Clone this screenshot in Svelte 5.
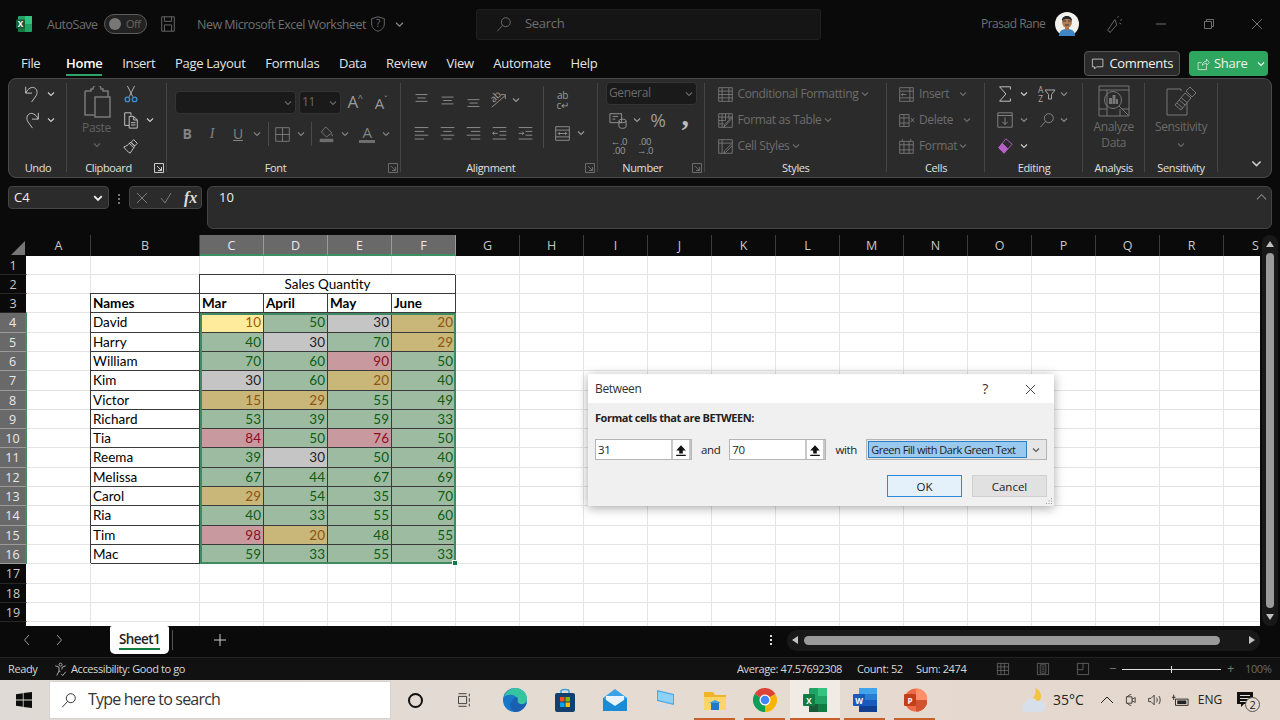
<script>
  const P = {
    undo: 'M3 2v7h7M3 9C6 3 10 2 12.500 3c3.500 1.500 4 6 2 9l-5 7',
    redo: 'M17 2v7h-7M17 9C14 3 10 2 7.500 3c-3.500 1.500-4 6-2 9l5 7',
    copy: 'M3 2h7v3M3 2v14h5M8 6h5l4 4v9H8zM13 6v4h4M10 13h5M10 15.500h5',
    brush: 'M13 3l4 4-3 3-4-4zM10 6l4 4-1 2-5-5zM8 7c-1 2-3 3-6 4 2 3 4 5 7 7 1-2 3-4 4-6',
    grid: 'M2 2h16v16H2zM10 2v16M2 10h16',
    alignT: 'M3 3h14M5 7h10M3 11h14',
    alignM: 'M3 6h14M5 10h10M3 14h14',
    alignB: 'M3 9h14M5 13h10M3 17h14',
    left: 'M2 3h16M2 7.500h11M2 12h16M2 16.500h11',
    center: 'M2 3h16M5 7.500h10M2 12h16M5 16.500h10',
    right: 'M2 3h16M7 7.500h11M2 12h16M7 16.500h11',
    outdent: 'M2 3h16M10 7.500h8M10 12h8M2 16.500h16M8 9.800H2m2-2l-2 2 2 2',
    indent: 'M2 3h16M10 7.500h8M10 12h8M2 16.500h16M2 9.800h6m-2-2l2 2-2 2',
    merge: 'M2 2h16v16H2zM2 6h16M2 14h16M5 10h10M5 10l2-2M5 10l2 2M15 10l-2-2M15 10l-2 2',
    cond: 'M2 2h16v16H2zM2 6h16M2 10h16M2 14h16M6 2v16M14 2v16',
    table: 'M2 2h16v16H2zM2 6h16M2 10h8M2 14h6M6 2v16M10 2v8M14 2v6M18 7l-8 9-2 2 1-3 8-9',
    styles: 'M2 2h16v16H2zM2 6h16M6 2v16M18 9l-8 8-2 1 1-3 8-8',
    insert: 'M2 2h16v16H2zM2 6h16M2 14h16M14 2v16M10 10H4m2-2l-2 2 2 2',
    del: 'M2 3h11v14H2zM2 7h11M2 13h11M7 3v14M15 7l4 5M19 7l-4 5',
    format: 'M2 4h16v14H2zM2 8h16M2 14h16M7 4v14M13 4v14M5 1v3M15 1v3',
    sigma: 'M4 2h12v3M4 2l7 8-7 8h12v-3',
    fillDown: 'M2 2h16v16H2zM2 5h16M10 7v8M7 12l3 3 3-3',
    find: 'M7 8a5 5 0 1 0 10 0a5 5 0 1 0-10 0M8.500 11.500L2.500 18',
    shield: 'M10 2l7 2v6c0 4-3 7-7 8-4-1-7-4-7-8V4z',
    save: 'M3 2h14v16H3zM6 2v5h8V2M6 18v-7h8v7',
    comment: 'M2 3h15v11H8l-3 3v-3H2z',
    share: 'M3 8v10h12v-5M3 8h5M9 12c0-4 3-6 6-6V3l4 5-4 4V9c-2 0-4 1-6 3',
    lamp: 'M3 17l3 2 7-8-2-6zM6 19l-1 1M14 3l1-2M17 6l2-1M16 9l2 1',
    access: 'M10 1.500a2 2 0 1 0 .1 0M3 5l5 2v5l-3 6M17 5l-5 2v3M8 12l2 1M11 16l2 2 4-5',
    gridView: 'M2 2h16v16H2zM2 7h16M2 12h16M7 2v16M12 2v16',
    pageView: 'M2 2h16v16H2zM6 4h8v12H6zM8 7h4M8 10h4M8 13h4',
    breakView: 'M2 2h16v16H2zM2 11h8V2',
    taskview: 'M5 3h9M5 17h9M5 6h9v8H5zM17 3v3M17 8v4M17 14v3',
    cam: 'M4 6a9 9 0 0 1 5-3M4 14a9 9 0 0 0 5 3M3 6h7v8H3zM10 9l4-2v6l-4-2',
    speaker: 'M2 8h3l4-4v12l-4-4H2zM12 7c1 2 1 4 0 6M15 5c2 3 2 7 0 10'
  };
  const cols = 'ABCDEFGHIJKLMNOPQRS'.split('');
  const table = [
    ['David', 10, 50, 30, 20], ['Harry', 40, 30, 70, 29], ['William', 70, 60, 90, 50],
    ['Kim', 30, 60, 20, 40], ['Victor', 15, 29, 55, 49], ['Richard', 53, 39, 59, 33],
    ['Tia', 84, 50, 76, 50], ['Reema', 39, 30, 50, 40], ['Melissa', 67, 44, 67, 69],
    ['Carol', 29, 54, 35, 70], ['Ria', 40, 33, 55, 60], ['Tim', 98, 20, 48, 55], ['Mac', 59, 33, 55, 33]
  ];
  const heads = ['Names', 'Mar', 'April', 'May', 'June'];

  function tone(v) {
    if (v === 10) return 'active';
    if (v === 30) return 'gray';
    if (v < 30) return 'tan';
    if (v > 70) return 'pink';
    return 'green';
  }

  const rows = [];
  for (let r = 1; r <= 20; r++) {
    const cells = [];
    for (let c = 0; c < cols.length; c++) {
      let cls = '', text = '';
      if (r === 2 && c > 2 && c < 6) continue;
      if (r === 2 && c === 2) { cls = 'boxed merged'; text = 'Sales Quantity'; }
      if (r === 3 && c >= 1 && c <= 5) { cls = 'boxed bold'; text = heads[c - 1]; }
      if (r >= 4 && r <= 16) {
        const row = table[r - 4];
        if (c === 1) { cls = 'boxed'; text = row[0]; }
        if (c >= 2 && c <= 5) { cls = 'boxed num ' + tone(row[c - 1]); text = row[c - 1]; }
      }
      cells.push({ cls, text });
    }
    rows.push({ r, cells, sel: r >= 4 && r <= 16 });
  }

  const styleBtns = [['cond', 'Conditional Formatting'], ['table', 'Format as Table'], ['styles', 'Cell Styles']];
  const cellBtns = [['insert', 'Insert', 'w1'], ['del', 'Delete', 'w2'], ['format', 'Format', 'w3']];
  const align1 = ['alignT', 'alignM', 'alignB'];
  const align2 = ['left', 'center', 'right'];
</script>

{#snippet ic(name, cls = '')}
  <svg class="ic {cls}" viewBox="0 0 20 20"><path d={P[name]} /></svg>
{/snippet}

{#snippet chev(cls = '')}
  <svg class="chev {cls}" viewBox="0 0 8 8"><path d="M1 2.500l3 3 3-3" /></svg>
{/snippet}

{#snippet launcher(cls = '')}
  <svg class="launch {cls}" viewBox="0 0 10 10"><path d="M.5.500h9v9h-9zM3 3l4.500 4.500M7.500 4v3.500H4" /></svg>
{/snippet}

<div class="app">
  <header class="title">
    <svg class="xl" viewBox="0 0 18 18">
      <rect x="3" y="1" width="14" height="16" rx="1" fill="#21a366" />
      <rect x="10" y="1" width="7" height="8" fill="#33c481" />
      <rect x="3" y="9" width="7" height="8" fill="#107c41" />
      <rect x="1" y="4.500" width="9" height="9" rx="1" fill="#185c37" />
      <text x="5.500" y="12" text-anchor="middle">X</text>
    </svg>
    <span class="autosave">AutoSave</span>
    <span class="toggle"><i></i>Off</span>
    <span class="save">{@render ic('save')}</span>
    <span class="doc">New Microsoft Excel Worksheet</span>
    <span class="shield">{@render ic('shield')}<b>?</b></span>
    {@render chev('doc-chev')}
    <div class="search">{@render ic('find')}<span>Search</span></div>
    <span class="user">Prasad Rane</span>
    <svg class="avatar" viewBox="0 0 24 24">
      <circle cx="12" cy="12" r="12" fill="#f3f1ec" />
      <path d="M4 24c0-6 4-7 8-7s8 1 8 7z" fill="#3f86c6" />
      <rect x="10" y="14" width="4" height="4" fill="#a8724e" />
      <ellipse cx="12" cy="10" rx="5" ry="6" fill="#b07c58" />
      <path d="M7 9c-1-6 10-7 10 0-2-3-8-3-10 0z" fill="#20272c" />
      <path d="M8 9h3M13 9h3M10 13h4" stroke="#2b2320" stroke-width=".8" />
    </svg>
    <span class="lamp">{@render ic('lamp')}</span>
    <div class="win">
      <svg viewBox="0 0 12 12"><path d="M1 6h10" /></svg>
      <svg viewBox="0 0 12 12"><path d="M1.500 3.500h7v7h-7zM3.500 3.500v-2h7v7h-2" /></svg>
      <svg viewBox="0 0 12 12"><path d="M1 1l10 10M11 1L1 11" /></svg>
    </div>
  </header>

  <nav class="tabs">
    <span>File</span>
    <span class="cur">Home</span>
    <span>Insert</span>
    <span>Page Layout</span>
    <span>Formulas</span>
    <span>Data</span>
    <span>Review</span>
    <span>View</span>
    <span>Automate</span>
    <span>Help</span>
    <button class="comments">{@render ic('comment')}Comments</button>
    <button class="sharebtn">{@render ic('share')}<span>Share</span>{@render chev()}</button>
  </nav>

  <section class="ribbon">
    <div class="group g-undo">
      <div class="body">
        <span class="on">{@render ic('undo')}</span>{@render chev('on')}
        <span class="on">{@render ic('redo')}</span>{@render chev('on')}
      </div>
      <div class="label">Undo</div>
    </div>

    <div class="group g-clip">
      <div class="body">
        <div class="paste">
          <svg class="paste-ic" viewBox="0 0 30 32">
            <path d="M3 5h6V3h2a4 4 0 0 1 8 0h2v2h5v6M3 5v24h9M13 11h15v20H13z" />
          </svg>
          <span>Paste</span>
          {@render chev()}
        </div>
        <div class="clip-tools">
          <svg class="ic" viewBox="0 0 20 20">
            <path class="blade" d="M6 1l6 12M14 1L8 13" />
            <circle class="loop" cx="6" cy="16" r="2.500" /><circle class="loop" cx="14" cy="16" r="2.500" />
          </svg>
          <i></i>
          <span class="on">{@render ic('copy')}</span>{@render chev('on')}
          <span class="on">{@render ic('brush')}</span>
        </div>
      </div>
      <div class="label">Clipboard{@render launcher('on')}</div>
    </div>

    <div class="group g-font">
      <div class="body">
        <div class="font-top">
          <div class="select s-name">{@render chev()}</div>
          <div class="select s-size"><span>11</span>{@render chev()}</div>
          <span class="grow">A<sup>^</sup></span>
          <span class="shrink">A<sup>ˇ</sup></span>
        </div>
        <div class="font-row">
          <b>B</b><em>I</em><u>U</u>{@render chev()}
          <i class="vline"></i>
          {@render ic('grid')}{@render chev()}
          <i class="vline"></i>
          <span class="paint">
            <svg class="ic" viewBox="0 0 20 20"><path d="M9 1l7 7-6 5-6-6zM16 9l1 3" /><rect x="2" y="15" width="16" height="4" /></svg>
          </span>
          {@render chev()}
          <i></i>
          <span class="colora">A<i></i></span>
          {@render chev()}
        </div>
      </div>
      <div class="label">Font{@render launcher()}</div>
    </div>

    <div class="group g-align">
      <div class="body">
        {#each align1 as a}{@render ic(a)}{/each}
        <span class="orient"><span>ab</span><svg viewBox="0 0 20 20"><path d="M2 18L17 5M12 4h5v5" /></svg></span>
        {@render chev()}
        <i></i>
        <i class="vline tall"></i>
        <span class="wrap">ab<br />c↵</span>
        <i></i>
        {#each align2 as a}{@render ic(a)}{/each}
        {@render ic('outdent')}
        <span class="indent">{@render ic('indent')}</span>
        {@render ic('merge')}
        {@render chev()}
      </div>
      <div class="label">Alignment{@render launcher()}</div>
    </div>

    <div class="group g-num">
      <div class="body">
        <div class="select s-num"><span>General</span>{@render chev()}</div>
        <div class="num-row">
          <svg class="ic" viewBox="0 0 20 20"><path d="M1 3h13v10H1zM4 6h6M4 9h3M11 11a4 2 0 1 0 8 0a4 2 0 1 0-8 0M11 11v6c0 3 8 3 8 0v-6" /></svg>
          {@render chev()}
          <span class="pct">%</span>
          <span class="comma">,</span>
        </div>
        <div class="dec-row">
          <span class="dec"><span>←.0</span><span>.00</span></span>
          <span class="dec"><span>.00</span><span>→.0</span></span>
        </div>
      </div>
      <div class="label">Number{@render launcher()}</div>
    </div>

    <div class="group g-styles">
      <div class="body">
        {#each styleBtns as b}
          <div class="line">{@render ic(b[0])}<span>{b[1]}</span>{@render chev()}</div>
        {/each}
      </div>
      <div class="label">Styles</div>
    </div>

    <div class="group g-cells">
      <div class="body">
        {#each cellBtns as b}
          <div class="line">{@render ic(b[0])}<span class={b[2]}>{b[1]}</span>{@render chev()}</div>
        {/each}
      </div>
      <div class="label">Cells</div>
    </div>

    <div class="group g-edit">
      <div class="body">
        <span class="on">{@render ic('sigma')}</span>{@render chev('on')}
        <i></i>
        <span class="sortf"><span class="az">A<br />Z</span><svg viewBox="0 0 12 12"><path d="M1 2h10L7.500 6.500V11h-3V6.500z" /></svg></span>{@render chev()}
        {@render ic('fillDown')}{@render chev()}
        <i></i>
        {@render ic('find')}{@render chev()}
        <svg class="ic eraser" viewBox="0 0 20 20"><path d="M11 2l7 6-9 10-6-6z" /><path class="fillp" d="M7 7l6 6-4 5-6-6z" /></svg>{@render chev('on')}
      </div>
      <div class="label">Editing</div>
    </div>

    <div class="group g-tall g-ana">
      <div class="body">
        <svg class="big" viewBox="0 0 32 32">
          <path d="M1 1h30v30H1zM1 5h30M1 24h8M24 24h7M9 5v26M22 24v7" />
          <circle cx="15" cy="15" r="8.500" />
          <path d="M21 21l9 9" />
          <rect class="solid" x="11" y="13" width="3" height="6" /><rect class="solid" x="14.500" y="10" width="3" height="9" /><rect class="solid" x="18" y="14" width="2" height="5" />
        </svg>
        <span class="txt">Analyze<br />Data</span>
      </div>
      <div class="label">Analysis</div>
    </div>

    <div class="group g-tall g-sens">
      <div class="body">
        <svg class="big" viewBox="0 0 32 32">
          <path d="M2 4h14v2M2 4v26h20V18" />
          <path d="M10 20L20 8l6 5-10 12zM12 18l6 5M14 15l6 5M16 12.500l6 5" />
          <path d="M21 6l4-4 6 6-4 4z" />
        </svg>
        <span class="txt">Sensitivity</span>
        {@render chev()}
      </div>
      <div class="label">Sensitivity</div>
    </div>

    <div class="collapse">{@render chev('on')}</div>
  </section>

  <div class="formula">
    <div class="namebox"><span>C4</span>{@render chev()}</div>
    <span class="dots"></span>
    <div class="fxbox">
      <svg viewBox="0 0 12 12"><path d="M1 1l10 10M11 1L1 11" /></svg>
      <svg viewBox="0 0 12 12"><path d="M1 6l4 5 6-10" /></svg>
      <em>fx</em>
    </div>
    <div class="bar"><span>10</span><svg viewBox="0 0 12 8"><path d="M1 6.500L6 1.500l5 5" /></svg></div>
  </div>

  <div class="sheetrow">
    <div class="sheet">
      <div class="cells">
        <div class="corner"><i></i></div>
        {#each cols as c, i}
          <div class="colhead" class:sel={i >= 2 && i <= 5}>{c}</div>
        {/each}
        {#each rows as row}
          <div class="rowhead" class:sel={row.sel}>{row.r < 20 ? row.r : ''}</div>
          {#each row.cells as cell}
            <div class="cell {cell.cls}">{cell.text}</div>
          {/each}
        {/each}
        <div class="range"><i></i></div>
      </div>
    </div>
    <div class="vscroll">
      <svg viewBox="0 0 10 8"><path d="M5 1l4 6H1z" /></svg>
      <i></i>
      <svg viewBox="0 0 10 8"><path d="M5 7L1 1h8z" /></svg>
    </div>
  </div>

  <div class="sheetbar">
    <svg class="nav first" viewBox="0 0 8 12"><path d="M6 1L1.500 6 6 11" /></svg>
    <svg class="nav" viewBox="0 0 8 12"><path d="M2 1l4.500 5L2 11" /></svg>
    <div class="sheettab"><span>Sheet1</span></div>
    <i class="tabsep"></i>
    <svg class="plus" viewBox="0 0 12 12"><path d="M6 0v12M0 6h12" /></svg>
    <span class="vdots"></span>
    <div class="hscroll">
      <svg viewBox="0 0 8 10"><path d="M1 5l6-4v8z" /></svg>
      <i></i>
      <svg viewBox="0 0 8 10"><path d="M7 5L1 1v8z" /></svg>
    </div>
  </div>

  <footer class="status">
    <span class="ready">Ready</span>
    <span class="a11y">{@render ic('access')}Accessibility: Good to go</span>
    <span class="avg">Average: 47.57692308</span>
    <span class="count">Count: 52</span>
    <span class="sum">Sum: 2474</span>
    <span class="view">{@render ic('gridView')}</span>
    <span class="view">{@render ic('pageView')}</span>
    <span class="view">{@render ic('breakView')}</span>
    <span class="zoomctl">
      <b>−</b>
      <span class="slider"><i></i></span>
      <b>+</b>
    </span>
    <span class="pcent">100%</span>
  </footer>

  <div class="taskbar">
    <svg class="start" viewBox="0 0 16 16">
      <path d="M0 2.200l6.800-1v6.300H0zM7.600 1l8.400-1v7.500H7.600zM0 8.400h6.800v6.400L0 13.800zM7.600 8.400H16V16l-8.400-1.100z" />
    </svg>
    <div class="tsearch">
      <svg viewBox="0 0 20 20"><path d="M7 8a5 5 0 1 0 10 0a5 5 0 1 0-10 0M8.500 11.500L2.500 18" /></svg>
      <span>Type here to search</span>
    </div>
    <i class="cortana"></i>
    <svg class="taskview" viewBox="0 0 20 20"><path d={P.taskview} /></svg>
    <span class="app-ic">
      <svg viewBox="0 0 24 24">
        <circle cx="12" cy="12" r="12" fill="#1777c8" />
        <path d="M1 9C3 3 8 0 13 0c6 0 11 5 11 11 0 4-4 6-7 5-2-1-3-2-2-4-1-5-9-7-14-3z" fill="#35c4a0" />
        <path d="M9 13c1-3 4-4 6-3l-1 2c0 3 3 5 7 4 1 0 2-1 3-2-1 5-6 10-12 10-3-1-5-4-5-7 0-2 1-3 2-4z" fill="#1b5fb0" />
      </svg>
    </span>
    <span class="app-ic">
      <svg viewBox="0 0 24 24">
        <path d="M8 6V3c0-2 8-2 8 0v3" fill="none" stroke="#3aa0d8" stroke-width="1.500" />
        <rect x="2" y="5" width="20" height="19" rx="2" fill="#11406e" />
        <rect x="7" y="9" width="4.500" height="4.500" fill="#f25022" /><rect x="12.500" y="9" width="4.500" height="4.500" fill="#7fba00" />
        <rect x="7" y="14.500" width="4.500" height="4.500" fill="#00a4ef" /><rect x="12.500" y="14.500" width="4.500" height="4.500" fill="#ffb900" />
      </svg>
    </span>
    <span class="app-ic">
      <svg viewBox="0 0 24 24">
        <path d="M0 10L12 1l12 9v13H0z" fill="#37a3e6" />
        <path d="M3 8h18v6l-9 5-9-5z" fill="#e8f3fb" />
        <path d="M0 10l12 8 12-8v13H0z" fill="#1c8bd6" />
      </svg>
    </span>
    <span class="app-ic">
      <svg viewBox="0 0 24 24">
        <path d="M4 2l17 4v11L4 13z" fill="#4aa8e8" />
        <path d="M5 3.500l15 3.500v8.500L5 12z" fill="#8fd0f5" />
        <path d="M2 18l8-2 9 3-7 3z" fill="#d7dde2" />
      </svg>
    </span>
    <span class="app-ic">
      <svg viewBox="0 0 24 24">
        <path d="M1 4h9l2 3h11v15H1z" fill="#f0b429" />
        <path d="M1 9h22v13H1z" fill="#fbd568" />
        <path d="M8 22v-7h8v7z" fill="#1f78c8" />
        <path d="M6 15l6-3 6 3z" fill="#3aa0e8" />
      </svg>
    </span>
    <span class="app-ic">
      <svg viewBox="0 0 24 24">
        <path d="M12 12L1.600 6A12 12 0 0 1 22.400 6z" fill="#db4437" />
        <path d="M12 12l-10.400-6A12 12 0 0 0 12 24z" fill="#0f9d58" />
        <path d="M12 12v12A12 12 0 0 0 22.400 6z" fill="#f4b400" />
        <circle cx="12" cy="12" r="5.500" fill="#fff" /><circle cx="12" cy="12" r="4.300" fill="#4285f4" />
      </svg>
    </span>
    <span class="app-ic current">
      <svg viewBox="0 0 24 24">
        <rect x="6" y="0" width="18" height="24" rx="1" fill="#21a366" />
        <rect x="15" y="0" width="9" height="8" fill="#33c481" />
        <rect x="6" y="16" width="9" height="8" fill="#185c37" /><rect x="15" y="16" width="9" height="8" fill="#107c41" />
        <rect x="0" y="6" width="12" height="12" rx="1" fill="#107c41" />
        <text x="6" y="15.500" text-anchor="middle">X</text>
      </svg>
    </span>
    <span class="app-ic">
      <svg viewBox="0 0 24 24">
        <rect x="6" y="0" width="18" height="24" rx="1" fill="#2b7cd3" />
        <rect x="6" y="0" width="18" height="6" fill="#41a5ee" />
        <rect x="6" y="12" width="18" height="6" fill="#185abd" /><rect x="6" y="18" width="18" height="6" fill="#103f91" />
        <rect x="0" y="6" width="12" height="12" rx="1" fill="#185abd" />
        <text x="6" y="15.500" text-anchor="middle">W</text>
      </svg>
    </span>
    <span class="app-ic">
      <svg viewBox="0 0 24 24">
        <circle cx="13" cy="12" r="11.500" fill="#ed6c47" />
        <path d="M13 .5a11.500 11.500 0 0 1 11.500 11.500H13z" fill="#ff8f6b" />
        <path d="M13 12h11.500A11.500 11.500 0 0 1 13 23.500z" fill="#d35230" />
        <rect x="1" y="6" width="12" height="12" rx="1" fill="#c43e1c" />
        <text x="7" y="15.500" text-anchor="middle">P</text>
      </svg>
    </span>
    <svg class="weather" viewBox="0 0 26 26">
      <path d="M14 1c6 2 8 9 4 14l-8-2c3-3 6-7 4-12z" fill="#f5c242" />
      <path d="M6 25a4.500 4.500 0 0 1-1-9 6 6 0 0 1 11-2 5.500 5.500 0 0 1 5 11z" fill="#d7dfea" />
    </svg>
    <span class="temp">35°C</span>
    <svg class="tray t-up" viewBox="0 0 16 16"><path d="M2 11l6-6 6 6" /></svg>
    <svg class="tray t-cam" viewBox="0 0 20 20"><path d={P.cam} /></svg>
    <svg class="tray t-spk" viewBox="0 0 20 20"><path d={P.speaker} /></svg>
    <svg class="tray t-bat" viewBox="0 0 20 20">
      <path d="M1 7h4M3 4v6M5 9h14v7H5z" /><rect class="lvl" x="7" y="10.500" width="10" height="4" />
    </svg>
    <span class="eng">ENG</span>
    <span class="notif">
      <svg viewBox="0 0 18 18"><path d="M1 1h16v12H8l-3 3v-3H1z" /><path class="ln" d="M4 4.500h10M4 7.500h10M4 10.500h7" /></svg>
      <b>2</b>
    </span>
  </div>

  <div class="dialog">
    <div class="d-title">
      <span>Between</span>
      <b>?</b>
      <svg viewBox="0 0 12 12"><path d="M1 1l10 10M11 1L1 11" /></svg>
    </div>
    <div class="d-body">
      <div class="d-head">Format cells that are BETWEEN:</div>
      <div class="d-row">
        <div class="refbox"><span>31</span><i><svg viewBox="0 0 10 10"><path d="M5 1L9 5.500H6.500V8h-3V5.500H1zM1 9h8v1H1z" /></svg></i></div>
        <span class="word w-and">and</span>
        <div class="refbox"><span>70</span><i><svg viewBox="0 0 10 10"><path d="M5 1L9 5.500H6.500V8h-3V5.500H1zM1 9h8v1H1z" /></svg></i></div>
        <span class="word w-with">with</span>
        <div class="combo"><span>Green Fill with Dark Green Text</span><i>{@render chev()}</i></div>
      </div>
      <div class="d-btns">
        <button class="ok">OK</button>
        <button class="cancel">Cancel</button>
      </div>
      <svg class="grip" viewBox="0 0 8 8"><path d="M6 1h1v1H6zM3.500 3.500h1v1h-1zM6 3.500h1v1H6zM1 6h1v1H1zM3.500 6h1v1h-1zM6 6h1v1H6z" /></svg>
    </div>
  </div>
</div>

<style>
  :global(body) { margin: 0; background: #0a0a0a; }
  .app {
    position: relative;
    width: 1280px;
    height: 720px;
    overflow: hidden;
    display: flex;
    flex-direction: column;
    background: #0a0a0a;
    color: #ddd;
    font: 12px/1.2 "Open Sans", "Noto Sans", sans-serif;
    letter-spacing: -.03em;
  }
  svg { display: block; flex: none; }
  .ic { width: 18px; height: 18px; fill: none; stroke: currentColor; stroke-width: 1; }
  .chev { width: 8px; height: 8px; fill: none; stroke: currentColor; stroke-width: 1.1; }
  .launch { width: 10px; height: 10px; fill: none; stroke: currentColor; stroke-width: 1; }
  i { font-style: normal; display: block; }

  /* title bar */
  .title { height: 48px; flex: none; display: flex; align-items: center; color: #6f6f6f; font-size: 12.500px; letter-spacing: -.5px; }
  .xl { width: 18px; height: 18px; margin-left: 15px; }
  .xl text, .app-ic text { fill: #fff; font: 700 8px "Open Sans", sans-serif; letter-spacing: 0; }
  .autosave { margin-left: 14px; width: 57px; }
  .toggle {
    width: 43px; height: 20px; box-sizing: border-box; border: 1px solid #5c5c5c; border-radius: 10px; background: #222;
    display: flex; align-items: center; gap: 5px; padding-left: 4px; font-size: 11px; color: #666;
  }
  .toggle i { width: 12px; height: 12px; border-radius: 50%; background: #777; }
  .save { margin-left: 12px; }
  .doc { margin-left: 20px; width: 171px; white-space: nowrap; }
  .shield { position: relative; margin-left: 1px; display: flex; }
  .shield b { position: absolute; inset: 2px 0 0; text-align: center; font-weight: 400; font-size: 10px; }
  .doc-chev { margin-left: 8px; width: 9px; height: 9px; color: #8a8a8a; }
  .search {
    margin-left: 72px; width: 345px; height: 31px; box-sizing: border-box; background: #151515; border-radius: 3px; border: 1px solid #1f1f1f;
    display: flex; align-items: center; padding-left: 18px; gap: 12px; font-size: 13px; color: #6f6f6f; letter-spacing: -.3px;
  }
  .user { margin-left: 160px; width: 74px; white-space: nowrap; font-size: 12px; }
  .avatar { width: 24px; height: 24px; }
  .lamp { margin-left: 26px; }
  .win { margin-left: 32px; display: flex; gap: 36px; color: #6f6f6f; }
  .win svg { width: 12px; height: 12px; fill: none; stroke: currentColor; }

  /* tabs */
  .tabs { height: 30px; flex: none; display: flex; align-items: center; font-size: 13px; color: #e4e4e4; padding: 1px 0 0 21px; box-sizing: border-box; gap: 19.700px; letter-spacing: -.3px; }
  .tabs .cur { color: #fff; font-weight: 600; position: relative; margin-left: 6px; }
  .tabs .cur::after { content: ''; position: absolute; left: 0; right: 0; bottom: -5px; height: 2px; background: #2fa36b; }
  .tabs button { font: inherit; letter-spacing: inherit; color: #f0f0f0; border-radius: 4px; display: flex; align-items: center; height: 25px; box-sizing: border-box; padding: 0; }
  .comments { margin-left: auto; width: 96px; border: 1px solid #555; background: #2a2a2a; justify-content: center; gap: 4px; }
  .comments .ic { width: 14px; height: 14px; }
  .sharebtn { width: 79px; margin: 0 12px 0 -11px; border: 0; background: #2ea65f; gap: 4px; padding-left: 7px !important; }
  .sharebtn .ic { width: 14px; height: 14px; }
  .sharebtn .chev { margin-left: 6px; }

  /* ribbon */
  .ribbon {
    height: 100px; flex: none; box-sizing: border-box; margin: 0 8px; display: flex;
    background: #2b2b2b; border: 1px solid #4a4a4a; border-radius: 8px; color: #7d7d7d;
  }
  .group { position: relative; flex: none; display: flex; flex-direction: column; box-sizing: border-box; }
  .group::after { content: ''; position: absolute; right: 0; top: 4px; bottom: 5px; width: 1px; background: #454545; }
  .body { height: 80px; box-sizing: border-box; padding-top: 2px; }
  .label { height: 18px; display: flex; align-items: center; justify-content: center; font-size: 11px; color: #e0e0e0; position: relative; }
  .g-clip .label, .g-font .label, .g-align .label, .g-num .label { padding-right: 17px; }
  .label .launch { position: absolute; right: 3px; top: 4px; color: #6a6a6a; }
  .label .launch.on { color: #ccc; }
  .on { color: #cfcfcf; }

  .g-undo { width: 58px; }
  .g-undo .body { display: grid; grid-template-columns: 24px 14px; grid-auto-rows: 26px; padding-left: 11px; place-items: center; }
  .g-clip { width: 100px; }
  .g-clip .body { display: flex; padding-left: 5px; }
  .paste { width: 49px; display: flex; flex-direction: column; align-items: center; padding-top: 5px; font-size: 12px; color: #626262; }
  .paste-ic { width: 30px; height: 32px; fill: none; stroke: #7a7a7a; stroke-width: 1.500; }
  .paste span { margin-top: 3px; }
  .paste .chev { margin-top: 6px; }
  .clip-tools { display: grid; grid-template-columns: 20px 18px; grid-auto-rows: 26px; place-items: center; }
  .blade { stroke: #bbb; }
  .loop { stroke: #3e8fd0; stroke-width: 1.500; }

  .g-font { width: 234px; }
  .g-font .body { padding: 12px 0 0 8px; }
  .select { box-sizing: border-box; height: 23px; background: #1a1a1a; border: 1px solid #343434; border-radius: 4px; display: flex; align-items: center; justify-content: flex-end; padding-right: 3px; color: #6a6a6a; }
  .select span { margin-right: auto; padding-left: 2px; }
  .font-top { display: flex; align-items: center; }
  .s-name { width: 121px; margin-right: 3px; }
  .s-size { width: 42px; }
  .grow, .shrink { width: 26px; text-align: center; font-size: 17px; color: #9a9a9a; }
  .shrink { font-size: 15px; }
  .grow { margin-left: 1px; }
  sup { font-size: 9px; line-height: 0; }
  .font-row { display: grid; grid-template-columns: 24px 26px 26px 12px 10px 18px 20px 1px 28px 10px 5px 24px 14px; height: 26px; margin-top: 7px; place-items: center; font-size: 14px; color: #828282; }
  .font-row em { font-family: "Liberation Serif", serif; }
  .vline { width: 1px; height: 24px; background: #4a4a4a; }
  .font-row .ic { width: 17px; height: 17px; }
  .paint rect { fill: #6e6e6e; stroke: none; }
  .colora { font-size: 15px; line-height: 15px; text-align: center; width: 16px; }
  .colora i { height: 3px; background: #6e6e6e; }

  .g-align { width: 196.500px; }
  .g-align .body { display: grid; grid-template-columns: 26px 26px 26px 26px 8px 18px 11px 27px 10px; grid-template-rows: 26px 26px; row-gap: 7px; padding: 8px 0 0 7px; color: #9a9a9a; place-items: center; }
  .g-align .ic { width: 17px; height: 17px; }
  .orient { position: relative; width: 18px; height: 18px; }
  .orient span { position: absolute; left: 0; top: 0; font-size: 10px; transform: rotate(-45deg) translateY(-1px); color: #a0a0a0; }
  .orient svg { width: 18px; height: 18px; fill: none; stroke: currentColor; }
  .tall { grid-row: 1 / span 2; grid-column: 7; height: 62px; }
  .wrap { font-size: 10px; line-height: 10px; text-align: center; color: #9a9a9a; }
  .indent { grid-column: 5 / span 2; grid-row: 2; }

  .g-num { width: 107px; }
  .g-num .body { padding: 3px 0 0 8.500px; }
  .s-num { width: 91px; font-size: 12px; }
  .num-row { display: grid; grid-template-columns: 24px 14px 28px 26px; height: 26px; margin-top: 2px; place-items: center; color: #9a9a9a; }
  .pct { font-size: 19px; }
  .comma { font: 700 30px/16px "Liberation Serif", serif; color: #bbb; height: 26px; }
  .dec-row { display: flex; }
  .dec { width: 26px; display: flex; flex-direction: column; align-items: center; font-size: 9.500px; line-height: 9px; padding-top: 4px; color: #9a9a9a; }

  .g-styles { width: 182.500px; }
  .g-styles .body { padding-left: 12px; }
  .line { height: 26px; display: flex; align-items: center; white-space: nowrap; font-size: 12px; color: #6d6d6d; }
  .line .ic { color: #7d7d7d; width: 17px; height: 17px; }
  .g-styles .line span { margin: 0 3px 0 4px; }
  .g-cells { width: 98px; }
  .g-cells .body { padding-left: 11px; }
  .g-cells .line span { margin-left: 4px; }
  .w1 { width: 40px; }
  .w2 { width: 44px; }
  .w3 { width: 40px; }

  .g-edit { width: 98px; }
  .g-edit .body { display: grid; grid-template-columns: 24px 14px 4px 24px 10px; grid-auto-rows: 26px; padding-left: 8px; color: #8a8a8a; place-items: center; }
  .sortf { display: flex; align-items: center; gap: 1px; color: #aaa; }
  .az { font-size: 8.500px; line-height: 9px; text-align: center; }
  .sortf svg { width: 12px; height: 12px; fill: none; stroke: currentColor; }
  .eraser { stroke: #b65fc8; }
  .fillp { fill: #b65fc8; }

  .g-ana { width: 61.500px; }
  .g-sens { width: 73px; }
  .g-tall .body { display: flex; flex-direction: column; align-items: center; padding-top: 6px; color: #6a6a6a; }
  .big { width: 32px; height: 32px; fill: none; stroke: #777; stroke-width: 1; }
  .solid { fill: #777; stroke: none; }
  .txt { text-align: center; line-height: 16px; margin-top: 2px; }
  .g-sens .chev { margin-top: 6px; }
  .collapse { margin-left: auto; align-self: flex-end; padding: 0 9px 8px 0; }
  .collapse .chev { width: 11px; height: 11px; }

  /* formula bar */
  .formula { height: 43px; flex: none; margin: 8px 8px 6px; display: flex; align-items: flex-start; letter-spacing: 0; }
  .namebox {
    width: 101px; height: 23px; box-sizing: border-box; background: #2b2b2b; border: 1px solid #444; border-radius: 4px;
    display: flex; align-items: center; justify-content: space-between; padding: 0 5px; font-size: 13px; color: #eee;
  }
  .namebox .chev { width: 10px; height: 10px; stroke-width: 1.500; }
  .dots { width: 2px; height: 2px; margin: 8px 9px 0; background: #999; box-shadow: 0 4px #999, 0 8px #999; border-radius: 50%; }
  .fxbox {
    width: 73px; height: 23px; box-sizing: border-box; background: #2b2b2b; border: 1px solid #444; border-radius: 4px;
    display: flex; align-items: center; gap: 12px; padding: 0 5px 0 6px; color: #7a7a7a;
  }
  .fxbox svg { width: 12px; height: 12px; fill: none; stroke: currentColor; }
  .fxbox em { font: italic 700 16px/1 "Liberation Serif", serif; color: #ddd; }
  .bar {
    flex: 1; height: 43px; margin-left: 5px; box-sizing: border-box; background: #2b2b2b; border: 1px solid #444; border-radius: 6px;
    display: flex; justify-content: space-between; padding: 3px 4px 0 11px; font-size: 13px; color: #eee;
  }
  .bar svg { width: 11px; height: 8px; margin-top: 3px; fill: none; stroke: #888; stroke-width: 1.200; }

  /* sheet */
  .sheetrow { height: 391px; flex: none; display: flex; }
  .sheet { width: 1260px; flex: none; overflow: hidden; background: #fff; }
  .cells {
    position: relative;
    display: grid;
    grid-template-columns: 27px 64px 109px repeat(17, 64px);
    grid-template-rows: 20.500px repeat(20, 19.300px);
    font: 13.500px/19px Lato, "Liberation Sans", sans-serif;
    letter-spacing: 0;
    color: #000;
  }
  .corner { background: #0a0a0a; display: flex; justify-content: flex-end; align-items: flex-end; padding: 0 2px 1px 0; }
  .corner i { width: 0; height: 0; border-style: solid; border-width: 0 0 14px 14px; border-color: transparent transparent #777 transparent; }
  .colhead, .rowhead { background: #0a0a0a; color: #c8c8c8; text-align: center; font: 12.500px/19px "Open Sans", sans-serif; box-sizing: border-box; }
  .colhead { border-right: 1px solid #3c3c3c; line-height: 21px; }
  .rowhead { border-bottom: 1px solid #262626; border-right: 1px solid #fff; }
  .colhead.sel { background: #696969; color: #eaeaea; border-right-color: #9a9a9a; border-bottom: 2px solid #3c8f63; }
  .rowhead.sel { background: #696969; color: #eaeaea; border-bottom-color: #9a9a9a; border-right: 2px solid #3c8f63; }
  .cell { box-sizing: border-box; border-right: 1px solid #e4e4e4; border-bottom: 1px solid #e4e4e4; padding: 0 2px; white-space: nowrap; overflow: hidden; }
  .boxed { border-right-color: #3a3a3a; border-bottom-color: #3a3a3a; box-shadow: -1px -1px 0 #3a3a3a; overflow: visible; }
  .merged { grid-column: span 4; text-align: center; }
  .bold { font-weight: 700; }
  .num { text-align: right; }
  .active { background: #feeb9c; color: #a85a06; }
  .gray { background: #c5c5c5; color: #1e1e1e; }
  .tan { background: #c8b778; color: #8a5610; }
  .pink { background: #c89aa0; color: #8c0e22; }
  .green { background: #9dbba1; color: #0f5c12; }
  .range { position: absolute; grid-area: 5 / 4 / 18 / 8; inset: 0; box-sizing: border-box; border: 2px solid #3f8a63; pointer-events: none; }
  .range i { position: absolute; right: -4px; bottom: -4px; width: 6px; height: 6px; background: #107c41; border: 1px solid #fff; box-sizing: border-box; }

  .vscroll { width: 16px; margin: 0 2px; background: #181818; border-radius: 8px; display: flex; flex-direction: column; align-items: center; padding: 5px 0; box-sizing: border-box; height: 391px; }
  .vscroll svg { width: 10px; height: 8px; fill: #c0c0c0; }
  .vscroll i { flex: 1; width: 8px; margin: 5px 0; background: #9a9a9a; border-radius: 4px; }

  /* sheet tabs */
  .sheetbar { height: 32px; flex: none; display: flex; align-items: center; border-bottom: 1px solid #222; box-sizing: border-box; }
  .nav { width: 8px; height: 12px; fill: none; stroke: #999; margin-left: 24px; margin-top: -4px; }
  .nav.first { margin-left: 23px; }
  .sheettab { align-self: flex-start; margin-left: 47px; width: 59px; height: 28px; box-sizing: border-box; background: #fff; border-radius: 2px 2px 5px 5px; padding: 4px 0 0 9px; color: #222; font: 600 13.500px/18px "Open Sans", sans-serif; }
  .sheettab span { display: inline-block; width: 41px; border-bottom: 2px solid #107c41; letter-spacing: -.6px; }
  .tabsep { width: 1px; height: 20px; background: #555; margin: -4px 0 0 3px; }
  .plus { width: 12px; height: 12px; margin: -4px 0 0 41px; fill: none; stroke: #ccc; }
  .vdots { width: 2px; height: 2px; margin: -12px 0 0 544px; background: #ddd; box-shadow: 0 4px #ddd, 0 8px #ddd; }
  .hscroll { margin: -3px 0 0 15px; width: 473px; height: 21px; background: #181818; border-radius: 10px; display: flex; align-items: center; padding: 0 4px; box-sizing: border-box; }
  .hscroll svg { width: 8px; height: 10px; fill: #c0c0c0; }
  .hscroll i { width: 416px; height: 9px; margin: 0 28px 0 5px; background: #9a9a9a; border-radius: 5px; }

  /* status */
  .status { height: 22px; flex: none; display: flex; align-items: center; background: #111; font-size: 11px; color: #d8d8d8; white-space: nowrap; letter-spacing: -.4px; }
  .ready { margin-left: 8px; width: 45px; }
  .a11y { display: flex; align-items: center; gap: 3px; width: 620px; }
  .a11y .ic { width: 15px; height: 15px; }
  .avg { margin-left: 64px; width: 120px; }
  .count { width: 59px; }
  .sum { width: 80px; }
  .view { width: 40px; color: #777; display: flex; justify-content: flex-start; }
  .view .ic { width: 14px; height: 14px; }
  .zoomctl { display: flex; align-items: center; gap: 6px; margin-left: -7px; color: #777; }
  .zoomctl b { font-weight: 400; font-size: 13px; }
  .slider { width: 99px; height: 1px; background: #ddd; position: relative; display: block; }
  .slider i { position: absolute; left: 49px; top: -3px; width: 1px; height: 7px; background: #ddd; }
  .pcent { margin-left: 11px; color: #6a6a6a; }

  /* taskbar */
  .taskbar { height: 40px; flex: none; display: flex; align-items: center; background: linear-gradient(90deg, #dfdad5, #e6dbd1 60%, #e4d7cd); color: #222; letter-spacing: 0; }
  .start { width: 16px; height: 16px; margin-left: 16px; fill: #0c0c0c; }
  .tsearch { width: 342px; height: 38px; box-sizing: border-box; margin-left: 17px; background: #fff; border: 1px solid #d4d4d4; display: flex; align-items: center; padding-left: 10px; gap: 10px; font-size: 16px; color: #333; letter-spacing: -.8px; }
  .tsearch svg { width: 18px; height: 18px; fill: none; stroke: #222; }
  .cortana { width: 11px; height: 11px; border: 2.500px solid #111; border-radius: 50%; margin-left: 17px; }
  .taskview { width: 18px; height: 18px; margin: 0 0 0 31px; fill: none; stroke: #333; }
  .app-ic { width: 50px; display: flex; justify-content: center; position: relative; align-self: stretch; align-items: center; margin-left: 0; }
  .taskview + .app-ic { margin-left: 18px; }
  .app-ic svg { width: 24px; height: 24px; }
  .app-ic:nth-of-type(n+5)::after { content: ''; position: absolute; left: 4px; right: 5px; bottom: 0; height: 2px; background: #c8602c; }
  .current { background: #f1ebe6; }
  .app-ic.current::after { left: 0; right: 0; }
  .weather { width: 26px; height: 26px; margin-left: 81px; }
  .temp { font-size: 14px; margin-left: 6px; }
  .tray { fill: none; stroke: #222; }
  .t-up { width: 16px; height: 16px; margin-left: 15px; }
  .t-cam { width: 16px; height: 16px; margin-left: 9px; }
  .t-spk { width: 16px; height: 16px; margin-left: 7px; }
  .t-bat { width: 18px; height: 18px; margin-left: 8px; }
  .lvl { fill: #222; stroke: none; }
  .eng { font-size: 12px; margin-left: 9px; }
  .notif { position: relative; margin-left: 14px; }
  .notif svg { width: 18px; height: 18px; fill: #111; }
  .notif .ln { stroke: #e6dbd1; fill: none; }
  .notif b { position: absolute; left: 9px; top: 6px; width: 15px; height: 15px; box-sizing: border-box; border: 1px solid #555; border-radius: 50%; background: #e6dbd1; font: 400 11px/13px "Open Sans", sans-serif; text-align: center; }

  /* dialog */
  .dialog { position: absolute; left: 588px; top: 374px; width: 466px; height: 132px; background: #f0f0f0; box-shadow: 0 2px 10px rgba(0,0,0,.35); color: #222; display: flex; flex-direction: column; }
  .d-title { height: 29px; flex: none; box-sizing: border-box; padding: 2px 0 0 7px; background: #fff; display: flex; align-items: center; font-size: 12px; color: #333; }
  .d-title b { margin-left: auto; font-weight: 400; font-size: 14px; }
  .d-title svg { width: 11px; height: 11px; margin: 0 18px 0 37px; fill: none; stroke: #333; }
  .d-body { flex: 1; position: relative; padding: 7px 7px 0; }
  .d-head { font-weight: 700; font-size: 11px; line-height: 16px; color: #222; letter-spacing: -.45px; }
  .d-row { display: flex; align-items: center; margin-top: 13px; height: 21px; font-size: 11.500px; }
  .refbox { width: 97px; height: 21px; box-sizing: border-box; background: #fff; border: 1px solid #b5b5b5; display: flex; align-items: center; justify-content: space-between; padding-left: 2px; }
  .refbox i { width: 20px; height: 19px; box-sizing: border-box; border: 2px solid #c8c8c8; border-width: 0 2px 0 2px; display: flex; align-items: center; justify-content: center; }
  .refbox svg { width: 12px; height: 12px; fill: #111; }
  .word { text-align: center; }
  .w-and { width: 37.500px; }
  .w-with { width: 40px; }
  .combo { width: 181px; height: 21px; box-sizing: border-box; border: 1px solid #b5b5b5; background: #e6e6e6; display: flex; align-items: center; padding: 1px; }
  .combo span { width: 159px; height: 17px; background: #99c9ef; border: 1px solid #2a7fc4; box-sizing: border-box; line-height: 15px; font-size: 11px; padding-left: 2px; white-space: nowrap; letter-spacing: -.5px; }
  .combo i { flex: 1; display: flex; align-items: center; justify-content: center; color: #555; }
  .d-btns { display: flex; justify-content: flex-end; gap: 10px; margin-top: 15px; }
  .d-btns button { width: 75px; height: 22px; box-sizing: border-box; font: 11.500px "Open Sans", sans-serif; color: #222; padding: 0; }
  .ok { background: #e4f0fa; border: 1px solid #2e8ad8; }
  .cancel { background: #e1e1e1; border: 1px solid #d0d0d0; }
  .grip { position: absolute; right: 1px; bottom: 1px; width: 8px; height: 8px; fill: #999; }
</style>
